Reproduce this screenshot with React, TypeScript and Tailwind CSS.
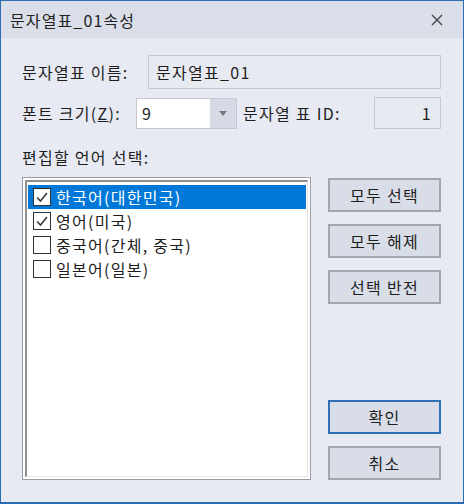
import React, { useState } from "react";

const font = { fontFamily: '"Noto Sans CJK KR", "Noto Sans", sans-serif' };

const languages = [
  { label: "한국어(대한민국)", checked: true },
  { label: "영어(미국)", checked: true },
  { label: "중국어(간체, 중국)", checked: false },
  { label: "일본어(일본)", checked: false },
];

function CheckBox({ checked }: { checked: boolean }) {
  return (
    <span className="w-[18px] h-[18px] border border-[#333333] bg-white flex items-center justify-center shrink-0">
      {checked && (
        <svg width="14" height="14" viewBox="0 0 14 14">
          <path d="M2 7.5 L5.5 11 L12 3" fill="none" stroke="#3a3a3a" strokeWidth="1.6" />
        </svg>
      )}
    </span>
  );
}

function DlgButton({ label, primary }: { label: string; primary?: boolean }) {
  return (
    <button
      className={
        "w-[113px] h-[34px] bg-[#d9dde8] text-[16px] tracking-[0.08em] text-[#1e1e1e] border-2 " +
        (primary ? "border-[#2f6fb3]" : "border-[#a3a6ae]")
      }
    >
      {label}
    </button>
  );
}

export default function App() {
  const [selected] = useState(0);

  return (
    <div
      style={font}
      className="w-[464px] h-[504px] bg-[#e7eaf3] border border-[#2b6cb3] border-b-2 flex flex-col text-[#1e1e1e] text-[16px] tracking-[0.08em] leading-[22px]"
    >
      {/* title bar */}
      <div className="h-[37px] bg-[#d9dee9] flex items-center justify-between pl-[9px] pr-[20px]">
        <span className="text-[16px] tracking-[0.07em] text-[#222]">문자열표_01속성</span>
        <svg width="12" height="12" viewBox="0 0 12 12">
          <path d="M1 1 L11 11 M11 1 L1 11" stroke="#444" strokeWidth="1.4" />
        </svg>
      </div>

      <div className="flex-1 flex flex-col pl-[21px] pr-[22px] pt-[17px] pb-[22px]">
        {/* name row */}
        <div className="flex items-center">
          <span className="w-[126px]">문자열표 이름:</span>
          <div className="flex-1 h-[34px] border border-[#c5c8d0] bg-[#e8eaf2] flex items-center px-[7px]">
            문자열표_01
          </div>
        </div>

        {/* font size + id row */}
        <div className="flex items-center mt-[8px]">
          <span className="w-[114px]">
            폰트 크기(<span className="underline">Z</span>):
          </span>
          <div className="w-[101px] h-[31px] border border-[#c5c8d0] bg-white flex items-stretch">
            <span className="flex-1 flex items-center pl-[5px]">9</span>
            <span className="w-[26px] bg-[#d6dae6] flex items-center justify-center">
              <svg width="8" height="5" viewBox="0 0 8 5">
                <path d="M0 0 L8 0 L4 5 Z" fill="#7a7a7a" />
              </svg>
            </span>
          </div>
          <span className="ml-[6px]">문자열 표 ID:</span>
          <div className="ml-auto w-[67px] h-[32px] border border-[#c5c8d0] bg-[#e8eaf2] flex items-center justify-end pr-[8px]">
            1
          </div>
        </div>

        <div className="mt-[17px]">편집할 언어 선택:</div>

        {/* list + buttons */}
        <div className="flex-1 flex mt-[9px] gap-[17px]">
          <div className="w-[290px] border border-[#9c9ea5] bg-white p-[2px] flex">
            <div className="flex-1 border-t-2 border-l-2 border-r border-b border-t-[#8e8e8e] border-l-[#8e8e8e] border-r-[#e3e3e3] border-b-[#e3e3e3] pt-[3px] px-[1px]">
              {languages.map((lang, i) => (
                <div
                  key={lang.label}
                  className={
                    "h-[24px] flex items-center gap-[5px] pl-[5px] " +
                    (i === selected ? "bg-[#0078d7] text-white" : "")
                  }
                >
                  <CheckBox checked={lang.checked} />
                  <span>{lang.label}</span>
                </div>
              ))}
            </div>
          </div>

          <div className="flex flex-col pt-[1px]">
            <div className="flex flex-col gap-[12px]">
              <DlgButton label="모두 선택" />
              <DlgButton label="모두 해제" />
              <DlgButton label="선택 반전" />
            </div>
            <div className="mt-auto flex flex-col gap-[12px]">
              <DlgButton label="확인" primary />
              <DlgButton label="취소" />
            </div>
          </div>
        </div>
      </div>
    </div>
  );
}
